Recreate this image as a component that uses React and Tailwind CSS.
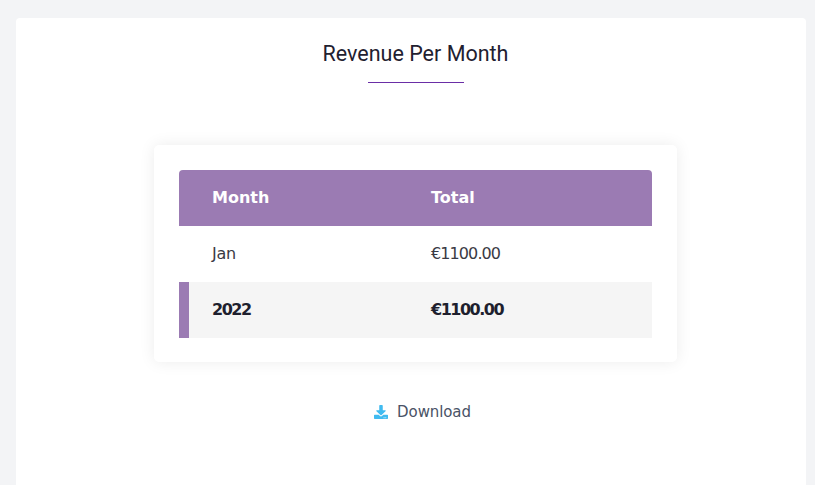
import React from "react";
import { FaDownload } from "react-icons/fa";

export default function App() {
  const dv = { fontFamily: '"DejaVu Sans", "Liberation Sans", sans-serif' };
  return (
    <div className="min-h-[485px] w-full bg-[#f3f4f6] pt-[18px] pl-4 pr-[9px] overflow-hidden">
      <div className="bg-white rounded-[4px] h-[480px] pl-[25px] pr-4 pt-[18px] flex flex-col items-center">
        <h1
          className="text-[21.5px] leading-[36px] text-[#1f2130]"
          style={{ fontFamily: 'Roboto, "Liberation Sans", sans-serif' }}
        >
          Revenue Per Month
        </h1>
        <div className="mt-[10px] w-24 h-px bg-[#6a2ea6]"></div>

        <div className="mt-[62px] w-[523px] bg-white rounded-[5px] shadow-[0_0_16px_rgba(0,0,0,0.08)] px-[25px] pt-[25px] pb-[24px]" style={dv}>
          <div className="flex h-14 items-center bg-[#9b7bb3] rounded-t-[4px] text-white font-bold text-[16px]">
            <div className="w-[219px] pl-[33px]">Month</div>
            <div className="pl-[33px]">Total</div>
          </div>
          <div className="flex h-14 items-center bg-white text-[#3a3a44] text-[16px]">
            <div className="w-[219px] pl-[33px] tracking-[-0.3px]">Jan</div>
            <div className="pl-[33px] tracking-[-0.9px]">€1100.00</div>
          </div>
          <div className="flex h-14 items-center bg-[#f5f5f5] text-[#1e1f2e] font-bold text-[16px] border-l-[10px] border-[#9b7bb3]">
            <div className="w-[209px] pl-[23px] tracking-[-1.5px]">2022</div>
            <div className="pl-[33px] tracking-[-1.5px]">€1100.00</div>
          </div>
        </div>

        <div className="mt-[39px] flex items-center gap-[9px] pl-[14px]" style={dv}>
          <FaDownload className="text-[#40bbf0] w-[14px] h-[14px]" />
          <span className="text-[15px] text-[#4a5366] tracking-[-0.1px]">Download</span>
        </div>
      </div>
    </div>
  );
}
